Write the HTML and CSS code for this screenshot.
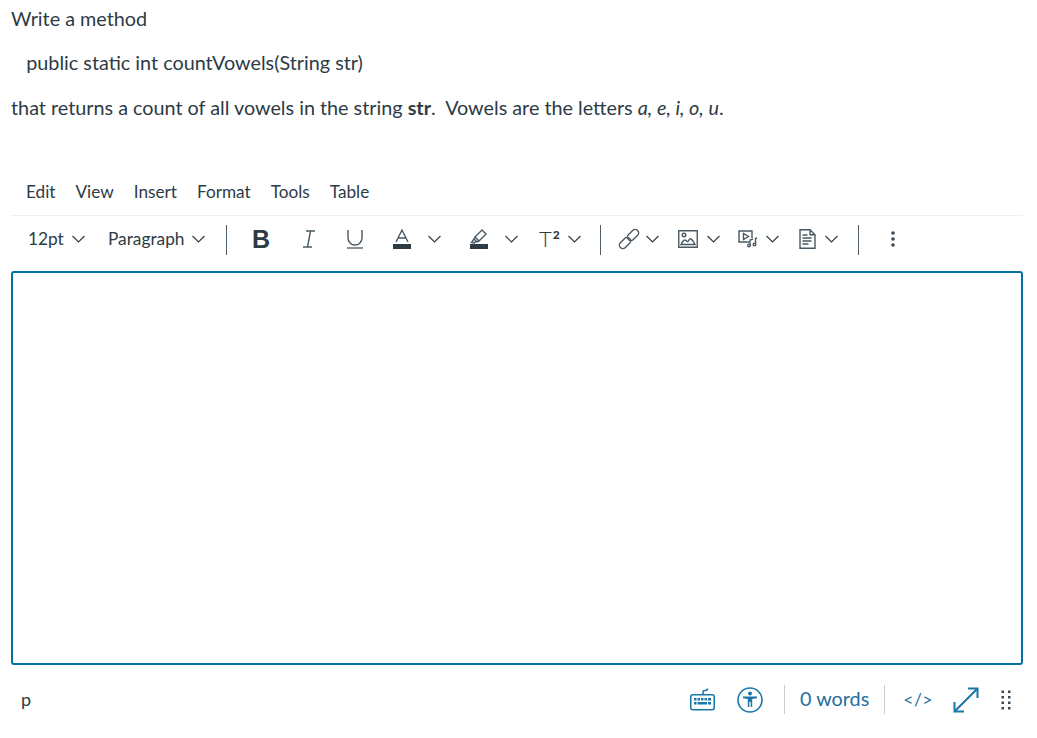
FILE: index.html
```html
<!DOCTYPE html>
<html lang="en">
<head>
<meta charset="utf-8">
<title>Question</title>
<link rel="stylesheet" href="styles.css">
</head>
<body>
<div class="question">
  <p class="line">Write a method</p>
  <p class="line code">&nbsp;&nbsp;&nbsp;public static int countVowels(String str)</p>
  <p class="line">that returns a count of all vowels in the string <strong>str</strong>.&nbsp; Vowels are the letters <em>a, e, i, o, u</em>.</p>
</div>
<div class="editor">
  <div class="menubar">
    <span>Edit</span><span>View</span><span>Insert</span><span>Format</span><span>Tools</span><span>Table</span>
  </div>
  <div class="toolbar">
    <div class="group g-size"><span class="tool-text">12pt</span><svg class="chev" viewBox="0 0 13 8"><path d="M.5 1l6 6 6-6"/></svg></div>
    <div class="group g-para"><span class="tool-text">Paragraph</span><svg class="chev" viewBox="0 0 13 8"><path d="M.5 1l6 6 6-6"/></svg></div>
    <i class="sep s1"></i>
    <span class="bold">B</span>
    <svg class="ico i-italic" viewBox="0 0 16 20"><path class="thin" d="M5 2h9M2 18h9M9.500 2L6.500 18"/></svg>
    <svg class="ico i-under" viewBox="0 0 18 20"><path class="thin" d="M2 1v8a7 7 0 0 0 14 0V1"/><path class="grey" d="M1 19h16"/></svg>
    <svg class="ico i-color" viewBox="0 0 18 20"><path class="thin" d="M3 13L9 1l6 12M5 9h8"/><rect class="fill" y="15" width="18" height="5"/></svg>
    <svg class="chev c-color" viewBox="0 0 13 8"><path d="M.5 1l6 6 6-6"/></svg>
    <svg class="ico i-high" viewBox="0 0 18 20"><path class="thin" d="M5 8l7-7 4 4-7 7zM5 8l-1 2 3 3 2-1M4 10l-2.500 3.500 3 .5 1.500-2"/><rect class="fill" y="15" width="18" height="5"/></svg>
    <svg class="chev c-high" viewBox="0 0 13 8"><path d="M.5 1l6 6 6-6"/></svg>
    <span class="sup">T<b>2</b></span>
    <svg class="chev c-sup" viewBox="0 0 13 8"><path d="M.5 1l6 6 6-6"/></svg>
    <i class="sep s2"></i>
    <svg class="ico i-link" viewBox="0 0 20 20"><rect class="thin" x="-.5" y="10.500" width="13" height="7" rx="3.500" transform="rotate(-45 6 14)"/><rect class="thin" x="7.500" y="2.500" width="13" height="7" rx="3.500" transform="rotate(-45 14 6)"/></svg>
    <svg class="chev c-link" viewBox="0 0 13 8"><path d="M.5 1l6 6 6-6"/></svg>
    <svg class="ico i-image" viewBox="0 0 20 18"><path class="thin" d="M.75.750h18.500v16.500H.75z"/><circle class="thin" cx="6" cy="5" r="1.800"/><path class="thin" d="M3 14.500c2-4 3.500-5.500 5-4 1.500 1.500 2 1.500 3-.500 1-2 3-2 6 4.500z"/></svg>
    <svg class="chev c-image" viewBox="0 0 13 8"><path d="M.5 1l6 6 6-6"/></svg>
    <svg class="ico i-media" viewBox="0 0 20 18"><path class="thin" d="M11 12H1V1h13v7"/><path class="thin" d="M5.500 3.500v6l5-3z"/><path class="thin" d="M12 15V10l3-1M17.500 14V8.500L19 8"/><circle class="thin" cx="11" cy="15.500" r="1.300"/><circle class="thin" cx="16.500" cy="14.500" r="1.300"/></svg>
    <svg class="chev c-media" viewBox="0 0 13 8"><path d="M.5 1l6 6 6-6"/></svg>
    <svg class="ico i-doc" viewBox="0 0 17 20"><path class="thin" d="M1 .75h10l5 5V19.250H1zM11 .75v5h5"/><path class="thin" d="M3.500 6h5M3.500 9h9M3.500 12h9M3.500 15h6"/></svg>
    <svg class="chev c-doc" viewBox="0 0 13 8"><path d="M.5 1l6 6 6-6"/></svg>
    <i class="sep s3"></i>
    <svg class="more" viewBox="0 0 4 16"><circle cx="2" cy="2" r="1.800"/><circle cx="2" cy="8" r="1.800"/><circle cx="2" cy="14" r="1.800"/></svg>
  </div>
  <div class="edit-area"></div>
  <div class="status">
    <span class="path">p</span>
    <div class="status-right">
      <svg class="s-ico kb" viewBox="0 0 25 23"><path d="M13 6V4c0-1 .5-1.500 1.500-1.500h1c1 0 2-.5 2-2" class="line-b"/><rect class="line-b" x=".75" y="6.750" width="23.500" height="15" rx="2"/><path class="dots" d="M4 10h2.500v2.500H4zM7.500 10H10v2.500H7.500zM11 10h2.500v2.500H11zM14.500 10H17v2.500h-2.500zM18 10h3v2.500h-3zM4 14h2.500v2.500H4zM7.500 14H17v2.500H7.500zM18 14h3v2.500h-3z"/></svg>
      <svg class="s-ico a11y" viewBox="0 0 26 26"><circle class="line-b" cx="13" cy="13" r="12"/><circle class="dots" cx="13" cy="6.500" r="2"/><path class="dots" d="M6 9.500h14v1.800l-4.800.7V20h-1.500v-5h-1.400v5h-1.500v-8l-4.800-.7z"/></svg>
      <i class="s-sep"></i>
      <span class="words">0 words</span>
      <i class="s-sep"></i>
      <span class="html">&lt;/&gt;</span>
      <svg class="s-ico full" viewBox="0 0 26 26"><path class="line-b thick" d="M1.500 24.500L24.500 1.500M15 1.500h9.500V11M1.500 15v9.500H11"/></svg>
      <svg class="grip" viewBox="0 0 10 20"><path d="M.5 .5H3V3H.5zM7 .5h2.500V3H7zM.5 6H3v2.500H.5zM7 6h2.500v2.500H7zM.5 11.500H3V14H.5zM7 11.500h2.500V14H7zM.5 17H3v2.500H.5zM7 17h2.500v2.500H7z"/></svg>
    </div>
  </div>
</div>
</body>
</html>
```

FILE: styles.css
```css
* { box-sizing: border-box; }
html, body { margin: 0; background: #fff; }
body {
  width: 1037px;
  height: 738px;
  overflow: hidden;
  padding: 7px 14px 0 11px;
  font-family: Lato, "Liberation Sans", sans-serif;
  color: #2d3b45;
}
.question { height: 115px; }
.line {
  margin: 0 0 21px;
  font-size: 19.8px;
  line-height: 23px;
}
.code { margin-bottom: 22px; }
.line strong { font-weight: 700; }
.menubar {
  display: flex;
  gap: 20px;
  height: 94px;
  padding: 60px 15px 0;
  border-bottom: 1px solid #eef0f1;
  font-size: 17.2px;
  line-height: 20px;
}
.toolbar {
  display: flex;
  align-items: center;
  height: 46px;
  padding-left: 17px;
}
.group { display: flex; align-items: center; }
.tool-text { font-size: 17.3px; margin-top: -2px; }
.g-size .tool-text { width: 36px; }
.g-para .tool-text { width: 77px; }
.chev { width: 13px; height: 8px; flex: none; }
.chev path { fill: none; stroke: #2d3b45; stroke-width: 1.100; }
.g-size .chev { margin-left: 8px; }
.g-para { margin-left: 23px; }
.g-para .chev { margin-left: 7px; }
.sep { width: 1px; height: 30px; background: #4f5e69; flex: none; margin-top: 2px; }
.s1 { margin-left: 21px; }
.bold { margin-left: 25px; width: 18px; font-size: 25px; font-weight: 700; font-family: "Liberation Sans", sans-serif; line-height: 1; }
.ico { flex: none; overflow: visible; }
.thin { fill: none; stroke: #4a5862; stroke-width: 1.400; }
.grey { fill: none; stroke: #6b7780; stroke-width: 1.600; }
.fill { fill: #2d3b45; }
.i-italic { width: 16px; height: 20px; margin-left: 31px; }
.i-under { width: 18px; height: 20px; margin-left: 29px; }
.i-color { width: 18px; height: 20px; margin-left: 29px; }
.c-color { margin-left: 17px; }
.i-high { width: 18px; height: 20px; margin-left: 29px; }
.c-high { margin-left: 17px; }
.sup { margin-left: 21px; width: 29px; font-size: 22px; font-weight: 300; line-height: 22px; display: flex; }
.sup b { font-size: 12px; font-weight: 900; line-height: 14px; margin-left: 1px; }
.s2 { margin-left: 19px; }
.i-link { width: 20px; height: 20px; margin-left: 18px; }
.c-link { margin-left: 7px; }
.i-image { width: 20px; height: 18px; margin-left: 19px; }
.c-image { margin-left: 9px; }
.i-media { width: 20px; height: 18px; margin-left: 18px; }
.c-media { margin-left: 8px; }
.i-doc { width: 17px; height: 20px; margin-left: 20px; }
.c-doc { margin-left: 9px; }
.s3 { margin-left: 20px; }
.more { width: 4px; height: 16px; margin-left: 32px; fill: #3a4852; }
.edit-area {
  height: 394px;
  margin-top: 9px;
  border: 2px solid #0770a3;
  border-radius: 3px;
}
.status {
  display: flex;
  align-items: center;
  justify-content: space-between;
  height: 69px;
  padding: 0 12px 0 10px;
}
.path { font-size: 18px; color: #2d3b45; margin-top: -2px; }
.status-right { display: flex; align-items: center; color: #1f6f9f; }
.s-ico { flex: none; }
.line-b { fill: none; stroke: #1a77a8; stroke-width: 1.600; }
.thick { stroke-width: 2; }
.dots { fill: #1a77a8; }
.kb { width: 25px; height: 23px; }
.a11y { width: 26px; height: 26px; margin-left: 22px; }
.s-sep { width: 1px; height: 29px; background: #c7cdd1; }
.a11y + .s-sep { margin-left: 21px; }
.words { font-size: 19.8px; margin-left: 15px; margin-top: -3px; }
.words + .s-sep { margin-left: 15px; }
.html { margin-left: 18px; font-size: 17.500px; letter-spacing: .5px; }
.full { width: 26px; height: 26px; margin-left: 20px; }
.grip { width: 10px; height: 20px; margin-left: 22px; fill: #3a4852; }
```
